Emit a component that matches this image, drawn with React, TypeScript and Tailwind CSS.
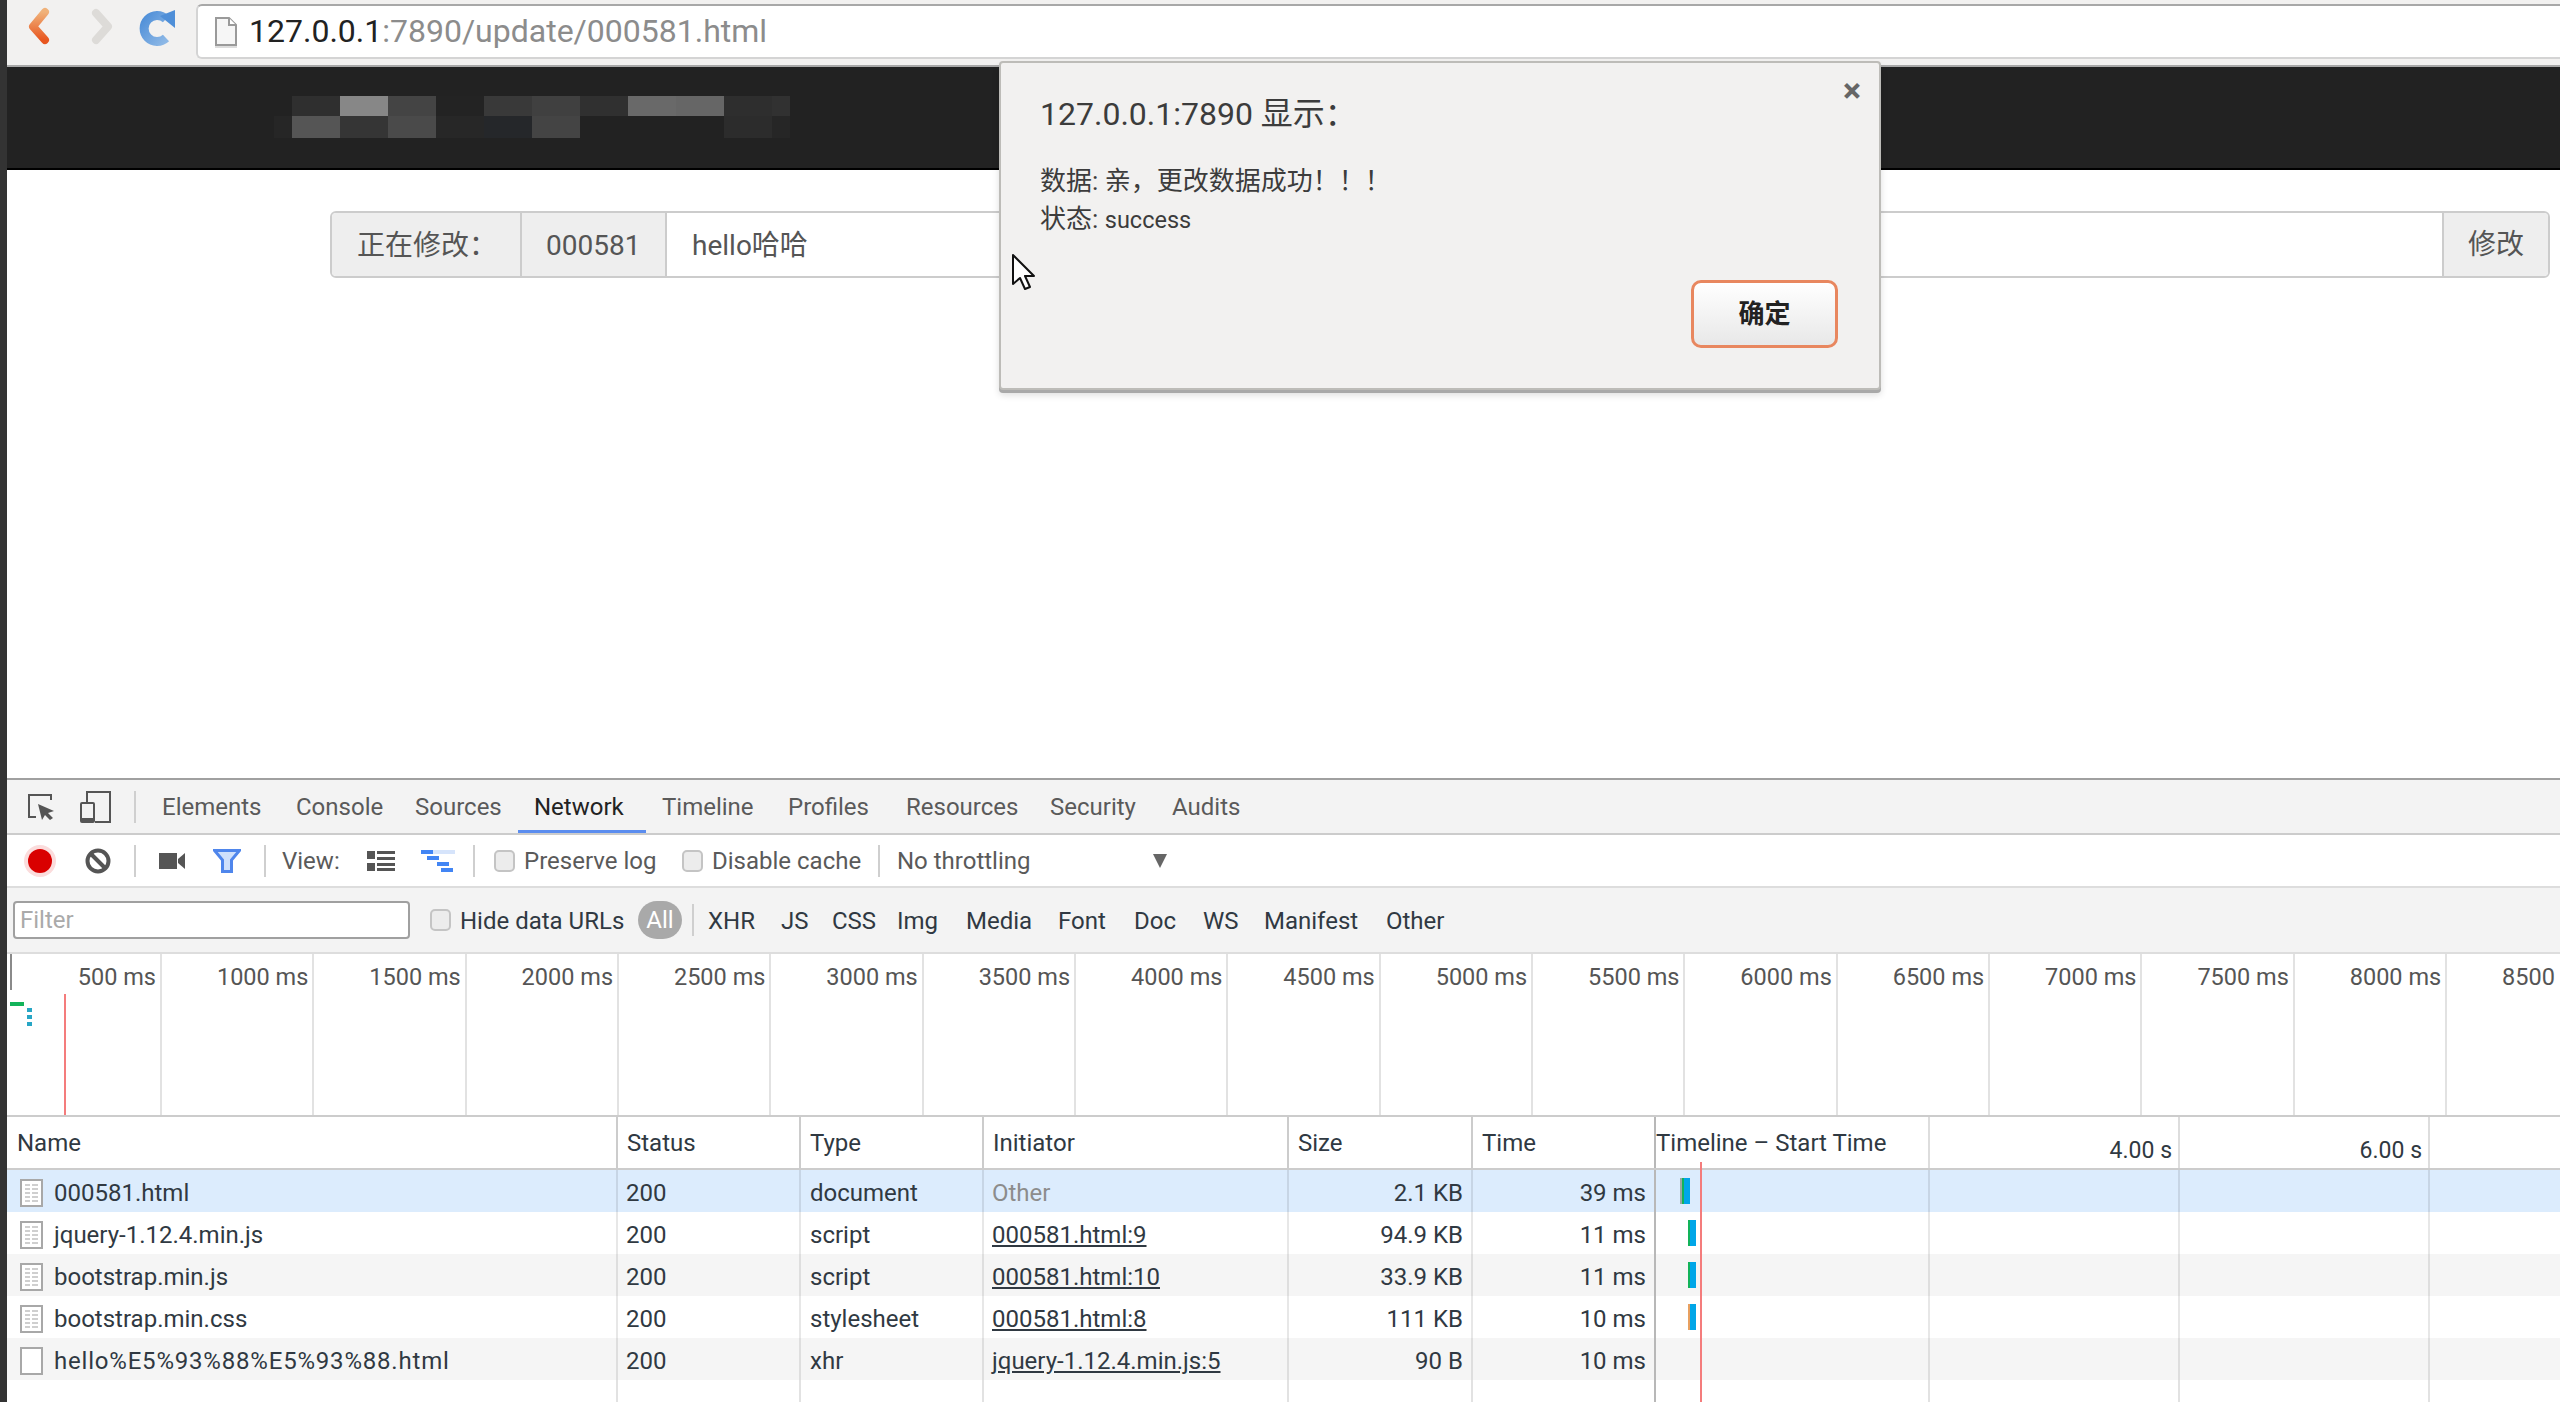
import React from "react";

const Sep = ({ className = "" }: { className?: string }) => (
  <div className={"w-[2px] h-[32px] bg-[#cfcfcf] shrink-0 " + className} />
);

const Check = ({ className = "" }: { className?: string }) => (
  <div className={"w-[21px] h-[22px] shrink-0 rounded-[5px] border-2 border-[#c4c4c4] bg-[#ececec] " + className} />
);

const Mosaic = () => {
  const cols = [292, 340, 388, 436, 484, 532, 580, 628, 676, 724, 772, 790];
  const r1 = ["#2f2f2f", "#878787", "#444444", "#232323", "#393939", "#404040", "#303030", "#696969", "#666666", "#2e2e2e", "#313131"];
  const r2 = ["#555555", "#353535", "#4a4a4a", "#272727", "#25272a", "#444444", "#222222", "#222222", "#222222", "#2c2c2c", "#262626"];
  return (
    <svg width="530" height="42" viewBox="272 94 530 42" className="ml-[265px] shrink-0">
      <rect x="274" y="114" width="18" height="22" fill="#262626" />
      {r1.map((c, i) => (
        <rect key={i} x={cols[i]} y="94" width={cols[i + 1] - cols[i]} height="20" fill={c} />
      ))}
      {r2.map((c, i) => (
        <rect key={i} x={cols[i]} y="114" width={cols[i + 1] - cols[i]} height="22" fill={c} />
      ))}
    </svg>
  );
};

const NavIcons = () => (
  <svg width="160" height="60" viewBox="20 4 160 60" className="shrink-0">
    <defs>
      <linearGradient id="bk" x1="0" y1="0" x2="0" y2="1">
        <stop offset="0" stopColor="#f0b27a" />
        <stop offset="1" stopColor="#e8561f" />
      </linearGradient>
      <linearGradient id="rl" x1="0" y1="0" x2="1" y2="1">
        <stop offset="0" stopColor="#4f8fd8" />
        <stop offset="1" stopColor="#8db8e6" />
      </linearGradient>
    </defs>
    <path d="M45 16 L33 30.5 L45 44" fill="none" stroke="url(#bk)" strokeWidth="8" strokeLinecap="round" strokeLinejoin="round" />
    <path d="M96 17 L108 30.5 L96 44" fill="none" stroke="#dddbd8" strokeWidth="8" strokeLinecap="round" strokeLinejoin="round" />
    <path d="M166 23 A13 13 0 1 0 166 42" fill="none" stroke="url(#rl)" strokeWidth="9" />
    <path d="M160 20 L175 14 L175 32 Z" fill="#4f8fd8" />
  </svg>
);

const PageIcon = () => (
  <svg width="24" height="32" viewBox="0 0 24 32" className="shrink-0">
    <path d="M2 2 H15 L22 9 V29 H2 Z" fill="#f6f6f6" stroke="#9a9a9a" strokeWidth="2" />
    <path d="M15 2 V9 H22" fill="#fff" stroke="#9a9a9a" strokeWidth="2" />
    <rect x="1" y="30" width="22" height="2" fill="#dddddd" />
  </svg>
);

const Inspect = () => (
  <svg width="28" height="28" viewBox="0 0 28 28" className="shrink-0">
    <path d="M24 7 V2 H2 V24 H9" fill="none" stroke="#555" strokeWidth="2" />
    <path d="M11 11 L27 18 L21 20 L26 25 L23 27 L18 22 L15 27 Z" fill="#555" />
  </svg>
);

const Device = () => (
  <svg width="32" height="34" viewBox="0 0 32 34" className="shrink-0">
    <path d="M7 13 V2 H30 V32 H15" fill="none" stroke="#555" strokeWidth="2" />
    <rect x="1" y="13" width="13" height="19" rx="1" fill="none" stroke="#555" strokeWidth="2" />
    <rect x="1" y="28" width="13" height="4" fill="#555" />
  </svg>
);

const Record = () => (
  <svg width="34" height="34" viewBox="0 0 34 34" className="shrink-0">
    <circle cx="17" cy="17" r="16" fill="#fbdcdc" />
    <circle cx="17" cy="17" r="12" fill="#d90000" />
  </svg>
);

const Clear = () => (
  <svg width="26" height="26" viewBox="0 0 26 26" className="shrink-0">
    <circle cx="13" cy="13" r="10.5" fill="none" stroke="#555" strokeWidth="4" />
    <path d="M6 6 L20 20" stroke="#555" strokeWidth="4" />
  </svg>
);

const Camera = () => (
  <svg width="26" height="18" viewBox="0 0 26 18" className="shrink-0">
    <rect x="0" y="1" width="18" height="16" fill="#555" />
    <path d="M19 7 L26 1 V17 L19 11 Z" fill="#555" />
  </svg>
);

const Funnel = () => (
  <svg width="28" height="24" viewBox="0 0 28 24" className="shrink-0">
    <path d="M1.5 1.5 H26.5 L18.5 11 V22.5 H9.5 V11 Z" fill="#cfe0fb" stroke="#4f86ec" strokeWidth="3" />
  </svg>
);

const ListIcon = () => (
  <svg width="28" height="20" viewBox="0 0 28 20" className="shrink-0">
    <rect x="0" y="0" width="8" height="8" fill="#555" />
    <rect x="0" y="12" width="8" height="8" fill="#555" />
    <rect x="10" y="0" width="18" height="3" fill="#555" />
    <rect x="10" y="6" width="18" height="3" fill="#555" />
    <rect x="10" y="12" width="18" height="3" fill="#555" />
    <rect x="10" y="17" width="18" height="3" fill="#555" />
  </svg>
);

const Waterfall = () => (
  <svg width="34" height="22" viewBox="0 0 34 22" className="shrink-0">
    <rect x="0" y="0" width="12" height="4" fill="#4285f4" />
    <rect x="12" y="0" width="22" height="4" fill="#d6e4fb" />
    <rect x="6" y="6" width="12" height="4" fill="#4285f4" />
    <rect x="16" y="12" width="12" height="4" fill="#4285f4" />
    <rect x="20" y="18" width="12" height="4" fill="#4285f4" />
  </svg>
);

const FileIcon = ({ plain }: { plain?: boolean }) => (
  <svg width="23" height="28" viewBox="0 0 23 28" className="shrink-0 ml-[13px]">
    <rect x="1" y="1" width="21" height="26" fill="#fff" stroke="#a8a8a8" strokeWidth="2" />
    {!plain &&
      [5, 9, 13, 17, 21].map((y) => (
        <g key={y}>
          <rect x="5" y={y} width="5" height="2" fill="#cfcfcf" />
          <rect x="12" y={y} width="6" height="2" fill="#cfcfcf" />
        </g>
      ))}
  </svg>
);

const tabs: [string, string][] = [
  ["Elements", "w-[134px]"],
  ["Console", "w-[119px]"],
  ["Sources", "w-[119px]"],
  ["Network", "w-[128px] text-[#222] shadow-[inset_0_-3px_0_#5b8def]"],
  ["Timeline", "w-[126px]"],
  ["Profiles", "w-[118px]"],
  ["Resources", "w-[144px]"],
  ["Security", "w-[122px]"],
  ["Audits", "w-[100px]"],
];

const filters: [string, string][] = [
  ["XHR", "w-[73px]"],
  ["JS", "w-[51px]"],
  ["CSS", "w-[65px]"],
  ["Img", "w-[69px]"],
  ["Media", "w-[92px]"],
  ["Font", "w-[76px]"],
  ["Doc", "w-[69px]"],
  ["WS", "w-[61px]"],
  ["Manifest", "w-[122px]"],
  ["Other", "w-[70px]"],
];

const ticks = [500, 1000, 1500, 2000, 2500, 3000, 3500, 4000, 4500, 5000, 5500, 6000, 6500, 7000, 7500, 8000, 8500];

type RowData = {
  name: string;
  type: string;
  init: string;
  link: boolean;
  size: string;
  time: string;
  bg: string;
  plain?: boolean;
  nameClass?: string;
  bar?: React.ReactNode;
};

const bar = "h-[26px] shrink-0";

const rows: RowData[] = [
  {
    name: "000581.html",
    type: "document",
    init: "Other",
    link: false,
    size: "2.1 KB",
    time: "39 ms",
    bg: "bg-[#dcecfd]",
    bar: (
      <div className="flex ml-[24px]">
        <div className={bar + " w-[2px] bg-[#9aa7a0]"} />
        <div className={bar + " w-[2px] bg-[#12b35a]"} />
        <div className={bar + " w-[6px] bg-[#00a6e8]"} />
      </div>
    ),
  },
  {
    name: "jquery-1.12.4.min.js",
    type: "script",
    init: "000581.html:9",
    link: true,
    size: "94.9 KB",
    time: "11 ms",
    bg: "bg-white",
    bar: (
      <div className="flex ml-[32px]">
        <div className={bar + " w-[2px] bg-[#12b35a]"} />
        <div className={bar + " w-[6px] bg-[#00a6e8]"} />
      </div>
    ),
  },
  {
    name: "bootstrap.min.js",
    type: "script",
    init: "000581.html:10",
    link: true,
    size: "33.9 KB",
    time: "11 ms",
    bg: "bg-[#f5f5f5]",
    bar: (
      <div className="flex ml-[32px]">
        <div className={bar + " w-[2px] bg-[#12b35a]"} />
        <div className={bar + " w-[6px] bg-[#00a6e8]"} />
      </div>
    ),
  },
  {
    name: "bootstrap.min.css",
    type: "stylesheet",
    init: "000581.html:8",
    link: true,
    size: "111 KB",
    time: "10 ms",
    bg: "bg-white",
    bar: (
      <div className="flex ml-[32px]">
        <div className={bar + " w-[2px] bg-[#e8a060]"} />
        <div className={bar + " w-[6px] bg-[#00a6e8]"} />
      </div>
    ),
  },
  {
    name: "hello%E5%93%88%E5%93%88.html",
    type: "xhr",
    init: "jquery-1.12.4.min.js:5",
    link: true,
    size: "90 B",
    time: "10 ms",
    bg: "bg-[#f5f5f5]",
    plain: true,
    nameClass: "tracking-[0.8px]",
  },
];

const line = "border-r-2 border-[#e2e2e2]";
const lineTint = "border-r-2 border-[#00000018]";

export default function App() {
  return (
    <div className="flex w-[2560px] h-[1402px] overflow-hidden bg-white text-[#303942] [font-family:Roboto,'Noto_Sans_CJK_SC',sans-serif]">
      <div className="w-[7px] shrink-0 bg-[#333333]" />
      <div className="relative flex-1 min-w-0 flex flex-col">
        {/* Browser toolbar */}
        <div className="h-[67px] shrink-0 flex bg-[#f2f1f0] border-b-2 border-[#a8a8a8] pt-[4px] pb-[6px]">
          <div className="shrink-0 -ml-[7px] pl-[20px] -mt-[4px]">
            <NavIcons />
          </div>
          <div className="flex-1 flex items-center ml-[16px] -mr-[10px] pl-[16px] rounded-l-[6px] border-2 border-[#a8a8a8] border-b-[#d4d4d4] border-l-[#d4d4d4] bg-white">
            <PageIcon />
            <div className="ml-[11px] -mt-[2px] text-[32px] text-[#8c8c8c] whitespace-nowrap">
              <span className="text-[#222]">127.0.0.1</span>:7890/update/000581.html
            </div>
          </div>
        </div>

        {/* Site navbar */}
        <div className="h-[103px] shrink-0 flex items-center bg-[#222222] border-b-2 border-black pb-[2px]">
          <Mosaic />
        </div>

        {/* Page body */}
        <div className="h-[608px] shrink-0 pt-[41px] pl-[323px] pr-[10px] bg-white">
          <div className="flex h-[67px] border-2 border-[#cccccc] rounded-[6px] text-[28px] text-[#555555] overflow-hidden">
            <div className="w-[190px] shrink-0 flex items-center pl-[25px] pt-[2px] bg-[#eeeeee] border-r-2 border-[#cccccc]">正在修改：</div>
            <div className="w-[145px] shrink-0 flex items-center pl-[24px] pt-[3px] bg-[#eeeeee] border-r-2 border-[#cccccc]">000581</div>
            <div className="flex-1 flex items-center pl-[25px] pt-[3px] bg-white">hello哈哈</div>
            <div className="w-[106px] shrink-0 flex items-center justify-center bg-[#eeeeee] border-l-2 border-[#cccccc]">修改</div>
          </div>
        </div>

        {/* DevTools tabs */}
        <div className="h-[57px] shrink-0 flex bg-[#f3f3f3] border-y-2 border-t-[#a0a0a0] border-b-[#cccccc]">
          <div className="flex items-center shrink-0 w-[139px] pl-[20px]">
            <Inspect />
            <div className="ml-[25px]">
              <Device />
            </div>
            <Sep className="ml-[22px]" />
          </div>
          <div className="flex text-[24px] text-[#5a5a5a]">
            {tabs.map(([t, c]) => (
              <div key={t} className={"flex items-center pl-[16px] pt-[1px] " + c}>
                {t}
              </div>
            ))}
          </div>
        </div>

        {/* Network toolbar */}
        <div className="h-[53px] shrink-0 flex items-center bg-white border-b-2 border-[#dddddd] text-[24px] text-[#5a5a5a]">
          <div className="ml-[16px]">
            <Record />
          </div>
          <div className="ml-[28px]">
            <Clear />
          </div>
          <Sep className="ml-[23px]" />
          <div className="ml-[23px]">
            <Camera />
          </div>
          <div className="ml-[28px]">
            <Funnel />
          </div>
          <Sep className="ml-[23px]" />
          <div className="ml-[16px] w-[85px] shrink-0 pt-[1px]">View:</div>
          <ListIcon />
          <div className="ml-[26px]">
            <Waterfall />
          </div>
          <Sep className="ml-[18px]" />
          <Check className="ml-[19px]" />
          <div className="ml-[9px] w-[158px] shrink-0 whitespace-nowrap pt-[1px]">Preserve log</div>
          <Check />
          <div className="ml-[9px] w-[166px] shrink-0 whitespace-nowrap pt-[1px]">Disable cache</div>
          <Sep />
          <div className="ml-[17px] w-[256px] shrink-0 whitespace-nowrap pt-[1px]">No throttling</div>
          <svg width="14" height="14" viewBox="0 0 14 14" className="shrink-0">
            <path d="M0 0 H14 L7 14 Z" fill="#666" />
          </svg>
        </div>

        {/* Filter bar */}
        <div className="h-[66px] shrink-0 flex items-center bg-[#f3f3f3] border-b-2 border-[#dddddd] text-[24px]">
          <div className="ml-[6px] w-[397px] h-[38px] shrink-0 flex items-center pl-[5px] bg-white border-2 border-[#a0a0a0] rounded-[4px] text-[#aaaaaa]">
            Filter
          </div>
          <Check className="ml-[20px]" />
          <div className="ml-[9px] w-[177px] shrink-0 whitespace-nowrap pt-[2px]">Hide data URLs</div>
          <div className="ml-[1px] w-[44px] h-[38px] shrink-0 flex items-center justify-center rounded-full bg-[#a9a9a9] text-white">All</div>
          <Sep className="ml-[10px]" />
          <div className="ml-[14px] flex pt-[2px]">
            {filters.map(([t, c]) => (
              <div key={t} className={"whitespace-nowrap " + c}>
                {t}
              </div>
            ))}
          </div>
        </div>

        {/* Overview */}
        <div className="relative h-[163px] shrink-0 flex border-b-2 border-[#cccccc] bg-white overflow-hidden text-[23.5px] text-[#555555]">
          {ticks.map((t, i) => (
            <div
              key={t}
              className={
                "shrink-0 h-full pr-[4px] pt-[6px] text-right whitespace-nowrap " +
                line +
                " " +
                (i === 0 ? "w-[155px]" : "w-[152.35px]")
              }
            >
              {t} ms
            </div>
          ))}
          <div className="absolute left-[3px] top-0 w-[2px] h-[36px] bg-[#8a8a8a]" />
          <div className="absolute left-[3px] top-[48px] w-[14px] h-[4px] bg-[#12b35a]" />
          <div className="absolute left-[20px] top-[54px] w-[5px] h-[4px] bg-[#27a6c5]" />
          <div className="absolute left-[20px] top-[61px] w-[5px] h-[4px] bg-[#27a6c5]" />
          <div className="absolute left-[20px] top-[68px] w-[5px] h-[4px] bg-[#27a6c5]" />
          <div className="absolute left-[57px] top-[40px] bottom-0 w-[2px] bg-[#f47c7c]" />
        </div>

        {/* Network table */}
        <div className="relative flex-1 min-h-0 flex flex-col text-[24px] overflow-hidden">
          <div className="h-[53px] shrink-0 flex border-b-2 border-[#cccccc]">
            <div className="w-[611px] shrink-0 flex items-center pl-[10px] border-r-2 border-[#cccccc]">Name</div>
            <div className="w-[183px] shrink-0 flex items-center pl-[9px] border-r-2 border-[#cccccc]">Status</div>
            <div className="w-[183px] shrink-0 flex items-center pl-[9px] border-r-2 border-[#cccccc]">Type</div>
            <div className="w-[305px] shrink-0 flex items-center pl-[9px] border-r-2 border-[#cccccc]">Initiator</div>
            <div className="w-[184px] shrink-0 flex items-center pl-[9px] border-r-2 border-[#cccccc]">Size</div>
            <div className="w-[183px] shrink-0 flex items-center pl-[9px] border-r-2 border-[#b8b8b8]">Time</div>
            <div className="w-[274px] shrink-0 flex items-center whitespace-nowrap border-r-2 border-[#dddddd]">Timeline – Start Time</div>
            <div className="w-[250px] shrink-0 flex items-end justify-end pr-[6px] text-[23px] border-r-2 border-[#dddddd]">4.00 s</div>
            <div className="w-[250px] shrink-0 flex items-end justify-end pr-[6px] text-[23px] border-r-2 border-[#dddddd]">6.00 s</div>
          </div>
          {rows.map((r) => (
            <div key={r.name} className={"h-[42px] shrink-0 flex " + r.bg}>
              <div className={"w-[611px] shrink-0 flex items-center whitespace-nowrap pt-[3px] " + lineTint}>
                <FileIcon plain={r.plain} />
                <span className={"ml-[11px] " + (r.nameClass ?? "")}>{r.name}</span>
              </div>
              <div className={"w-[183px] shrink-0 flex items-center pl-[8px] pt-[3px] " + lineTint}>200</div>
              <div className={"w-[183px] shrink-0 flex items-center pl-[9px] pt-[3px] " + lineTint}>{r.type}</div>
              <div className={"w-[305px] shrink-0 flex items-center pl-[8px] pt-[3px] whitespace-nowrap " + lineTint}>
                {r.link ? <span className="underline">{r.init}</span> : <span className="text-[#8c8c8c]">{r.init}</span>}
              </div>
              <div className={"w-[184px] shrink-0 flex items-center justify-end pr-[8px] pt-[3px] " + lineTint}>{r.size}</div>
              <div className={"w-[183px] shrink-0 flex items-center justify-end pr-[8px] pt-[3px] border-r-2 border-[#b8b8b8]"}>{r.time}</div>
              <div className={"w-[274px] shrink-0 flex items-center " + lineTint}>{r.bar}</div>
              <div className={"w-[250px] shrink-0 " + lineTint} />
              <div className={"w-[250px] shrink-0 " + lineTint} />
            </div>
          ))}
          <div className="flex-1 flex bg-white">
            <div className={"w-[611px] shrink-0 " + line} />
            <div className={"w-[183px] shrink-0 " + line} />
            <div className={"w-[183px] shrink-0 " + line} />
            <div className={"w-[305px] shrink-0 " + line} />
            <div className={"w-[184px] shrink-0 " + line} />
            <div className="w-[183px] shrink-0 border-r-2 border-[#b8b8b8]" />
            <div className={"w-[274px] shrink-0 " + line} />
            <div className={"w-[250px] shrink-0 " + line} />
            <div className={"w-[250px] shrink-0 " + line} />
          </div>
          <div className="absolute left-[1693px] top-[45px] bottom-0 w-[2px] bg-[#f47c7c]" />
        </div>

        {/* Alert dialog */}
        <div className="absolute left-[992px] top-[61px] w-[882px] h-[329px] flex flex-col pt-[33px] px-[39px] bg-[#f2f1f0] border-2 border-[#bdbcb8] rounded-[4px] shadow-[0_3px_0_#a9a9a9,0_5px_7px_#00000022] text-[#3c3c3c]">
          <div className="absolute right-[18px] top-[10px] text-[34px] leading-[34px] font-bold text-[#666666]">×</div>
          <div className="text-[32px] leading-[36px]">127.0.0.1:7890 显示：</div>
          <div className="mt-[30px] text-[26px] leading-[38px]">
            <div>数据: 亲，更改数据成功！！！</div>
            <div>
              状态: <span className="text-[23.5px]">success</span>
            </div>
          </div>
          <div className="mt-[41px] flex justify-end">
            <div className="w-[147px] h-[68px] mr-[2px] flex items-center justify-center rounded-[10px] border-[3px] border-[#e8875f] bg-gradient-to-b from-white to-[#e8e8e8] text-[26px] font-bold text-[#222222]">
              确定
            </div>
          </div>
        </div>

        {/* Mouse pointer */}
        <svg width="26" height="38" viewBox="0 0 26 38" className="absolute left-[1004px] top-[253px]">
          <path d="M2 2 V31 L9 25 L14 36 L19 34 L14 23 L23 23 Z" fill="#fff" stroke="#111" strokeWidth="2" strokeLinejoin="round" />
        </svg>
      </div>
    </div>
  );
}
